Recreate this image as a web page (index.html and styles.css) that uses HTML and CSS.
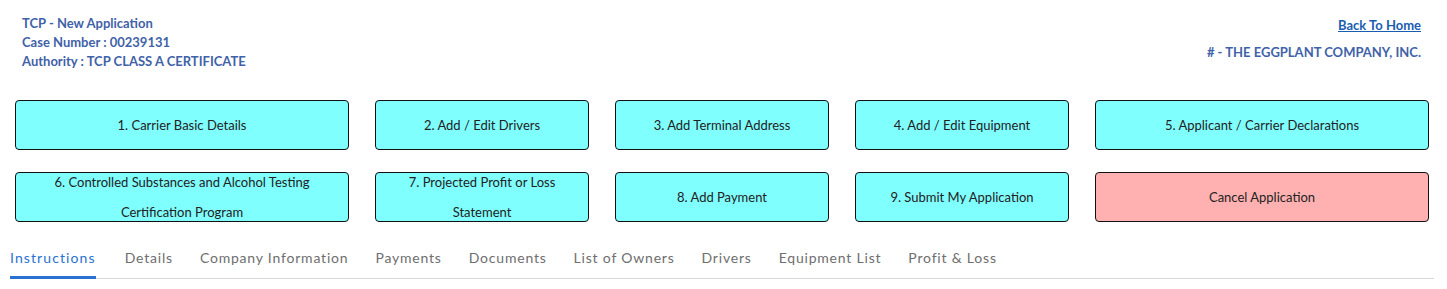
FILE: index.html
```html
<!DOCTYPE html>
<html>
<head>
<meta charset="utf-8">
<link rel="stylesheet" href="styles.css">
</head>
<body>
<div class="page">
  <header class="head">
    <div class="info">
      <div>TCP - New Application</div>
      <div>Case Number : 00239131</div>
      <div>Authority : TCP CLASS A CERTIFICATE</div>
    </div>
    <div class="side">
      <a class="home" href="#">Back To Home</a>
      <div class="company"># - THE EGGPLANT COMPANY, INC.</div>
    </div>
  </header>

  <div class="actions">
    <div class="btn">1. Carrier Basic Details</div>
    <div class="btn">2. Add / Edit Drivers</div>
    <div class="btn">3. Add Terminal Address</div>
    <div class="btn">4. Add / Edit Equipment</div>
    <div class="btn">5. Applicant / Carrier Declarations</div>
    <div class="btn"><span>6. Controlled Substances and Alcohol Testing<br>Certification Program</span></div>
    <div class="btn"><span>7. Projected Profit or Loss<br>Statement</span></div>
    <div class="btn">8. Add Payment</div>
    <div class="btn">9. Submit My Application</div>
    <div class="btn cancel">Cancel Application</div>
  </div>

  <nav class="tabs">
    <div class="tab active">Instructions</div>
    <div class="tab">Details</div>
    <div class="tab">Company Information</div>
    <div class="tab">Payments</div>
    <div class="tab">Documents</div>
    <div class="tab">List of Owners</div>
    <div class="tab">Drivers</div>
    <div class="tab">Equipment List</div>
    <div class="tab">Profit &amp; Loss</div>
  </nav>
</div>
</body>
</html>
```

FILE: styles.css
```css
html, body {
  margin: 0;
  padding: 0;
  background: #fff;
}
body {
  font-family: Lato, "Open Sans", sans-serif;
}
.page {
  width: 1447px;
}
.head {
  display: flex;
  justify-content: space-between;
  padding: 14px 26px 0 22px;
  height: 86px;
  box-sizing: border-box;
}
.info {
  font-size: 13px;
  font-weight: bold;
  line-height: 19px;
  color: #3f62a8;
}
.side {
  display: flex;
  flex-direction: column;
  align-items: flex-end;
  font-size: 13px;
  font-weight: bold;
}
.home {
  color: #1a5db0;
  text-decoration: underline;
  line-height: 19px;
  margin-top: 2px;
}
.company {
  color: #3f62a8;
  line-height: 19px;
  margin-top: 8px;
}
.actions {
  display: grid;
  grid-template-columns: 334px 214px 214px 214px 334px;
  column-gap: 26px;
  row-gap: 22px;
  padding-left: 15px;
  margin-top: 14px;
}
.btn {
  height: 50px;
  box-sizing: border-box;
  border: 1px solid #111;
  border-radius: 4px;
  background: #80ffff;
  display: flex;
  align-items: center;
  justify-content: center;
  text-align: center;
  font-size: 13px;
  color: #222;
  line-height: 30px;
  overflow: visible;
}
.btn span {
  display: block;
}
.cancel {
  background: #ffb1b1;
}
.tabs {
  display: flex;
  margin: 26px 13px 0 10px;
  border-bottom: 1px solid #d8d8d8;
}
.tab {
  font-size: 14px;
  letter-spacing: 0.8px;
  color: #6e6e6e;
  line-height: 20px;
  padding: 0 0 8px;
  margin-right: 27px;
  border-bottom: 3px solid transparent;
  margin-bottom: -1px;
}
.tab.active {
  color: #2a72d0;
  letter-spacing: 1.1px;
  border-bottom-color: #2a72d0;
  margin-right: 29px;
}
```
